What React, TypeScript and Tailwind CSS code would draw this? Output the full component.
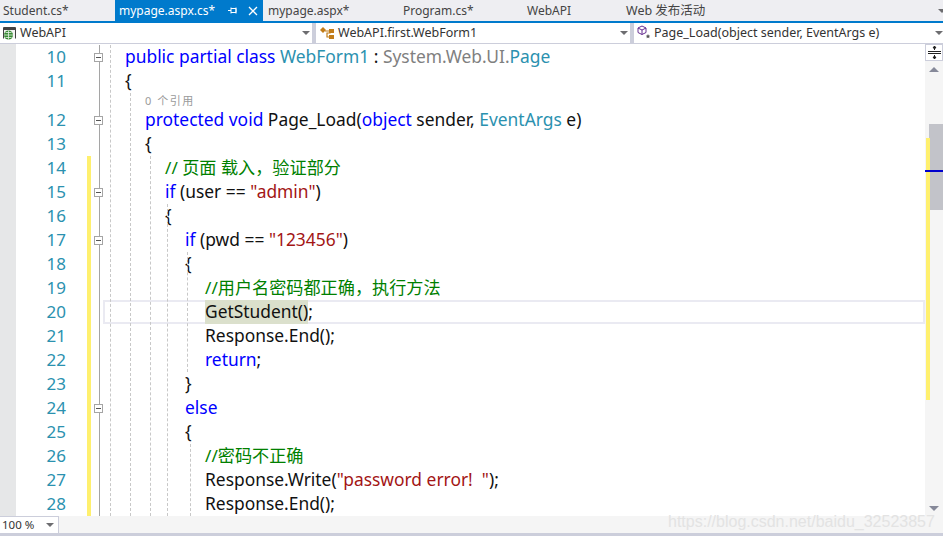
import React from "react";

const K = "text-[#0000ff]";
const T = "text-[#2b91af]";
const S = "text-[#a31515]";
const C = "text-[#008000] text-[17.15px]";
const G = "text-[#808080]";
const H = "text-[#111] bg-[#dbe0cc] h-[24px] flex items-center";

type Seg = [string, string?];
type Line = { n: number; x: number; segs: Seg[]; fold?: boolean; lens?: boolean; hl?: boolean };

const lines: Line[] = [
  { n: 10, x: 126, fold: true, segs: [["public partial class ", K], ["WebForm1", T], [" : "], ["System.Web.UI.", G], ["Page", T]] },
  { n: 11, x: 126, segs: [["{"]] },
  { n: 12, x: 146, fold: true, lens: true, segs: [["protected void ", K], ["Page_Load("], ["object", K], [" sender, "], ["EventArgs", T], [" e)"]] },
  { n: 13, x: 146, segs: [["{"]] },
  { n: 14, x: 166, segs: [["// 页面 载入，验证部分", C]] },
  { n: 15, x: 166, fold: true, segs: [["if", K], [" (user == "], ["\"admin\"", S], [")"]] },
  { n: 16, x: 166, segs: [["{"]] },
  { n: 17, x: 186, fold: true, segs: [["if", K], [" (pwd == "], ["\"123456\"", S], [")"]] },
  { n: 18, x: 186, segs: [["{"]] },
  { n: 19, x: 206, segs: [["//用户名密码都正确，执行方法", C]] },
  { n: 20, x: 206, hl: true, segs: [["GetStudent()", H], [";"]] },
  { n: 21, x: 206, segs: [["Response.End();"]] },
  { n: 22, x: 206, segs: [["return", K], [";"]] },
  { n: 23, x: 186, segs: [["}"]] },
  { n: 24, x: 186, fold: true, segs: [["else", K]] },
  { n: 25, x: 186, segs: [["{"]] },
  { n: 26, x: 206, segs: [["//密码不正确", C]] },
  { n: 27, x: 206, segs: [["Response.Write("], ["\"password error!  \"", S], [");"]] },
  { n: 28, x: 206, segs: [["Response.End();"]] },
];

const tabs = [
  { t: "Student.cs*", w: "w-[115px]", pl: "pl-[3px]" },
  { t: "mypage.aspx.cs*", w: "w-[148px]", pl: "pl-[4px]", active: true },
  { t: "mypage.aspx*", w: "w-[135px]", pl: "pl-[5px]" },
  { t: "Program.cs*", w: "w-[124px]", pl: "pl-[5px]" },
  { t: "WebAPI", w: "w-[99px]", pl: "pl-[5px]" },
  { t: "Web 发布活动", w: "flex-1 text-[12.5px]", pl: "pl-[5px]" },
];

const Caret = () => (
  <span className="block w-0 h-0 border-x-[4px] border-x-transparent border-t-[4px] border-t-[#6d6d70]" />
);

const Fold = () => (
  <span className="block w-[9px] h-[9px] border border-[#a5a5a5] bg-white relative">
    <span className="absolute left-[1px] top-[3px] w-[5px] h-px bg-[#555]" />
  </span>
);

const guides = [
  "left-[110px] top-[1px] h-[471px]",
  "left-[130px] top-[49px] h-[423px]",
  "left-[150px] top-[112px] h-[360px]",
  "left-[167px] top-[160px] h-[312px]",
  "left-[187px] top-[208px] h-[120px]",
  "left-[190px] top-[400px] h-[72px]",
];

export default function App() {
  return (
    <div
      className="w-[943px] h-[536px] overflow-hidden flex flex-col bg-white text-[#1e1e1e]"
      style={{ fontFamily: '"Noto Sans", "Noto Sans CJK SC", sans-serif' }}
    >
      {/* tabs */}
      <div className="h-[21px] flex bg-[#eeeef2] text-[12px] leading-none text-[#444] shrink-0">
        {tabs.map((t) => (
          <div
            key={t.t}
            className={`${t.w} ${t.pl} flex items-center whitespace-nowrap ${t.active ? "bg-[#007acc] text-white justify-between pr-[3px] pl-[4px]" : ""}`}
          >
            <span className="mt-px">{t.t}</span>
            {t.active && (
              <span className="flex items-center gap-[11px] pr-[2px]">
                <svg width="9" height="9" viewBox="0 0 9 9" fill="none" stroke="#fff" strokeWidth="1">
                  <path d="M0 4.5h3M3 1.5v6M3 2.5h5v4H3M8 1.5v6" />
                </svg>
                <svg width="10" height="10" viewBox="0 0 10 10" fill="none" stroke="#fff" strokeWidth="1.3">
                  <path d="M1 1l8 8M9 1l-8 8" />
                </svg>
              </span>
            )}
            {t.t === "Web 发布活动" && <span className="ml-auto -mr-[3px]"><Caret /></span>}
          </div>
        ))}
      </div>
      <div className="h-[2px] bg-[#007acc] shrink-0" />
      {/* nav bar */}
      <div className="h-[21px] flex bg-[#cccedb] border-b border-[#cccedb] text-[12.5px] leading-none text-[#333] shrink-0">
        <div className="w-[312px] bg-white flex items-center pl-[3px] pr-[2px]">
          <svg width="14" height="13" viewBox="0 0 14 13" className="shrink-0">
            <path d="M0.5 11.5V0.5h12v11" fill="#f4f4f4" stroke="#424242" />
            <rect x="1" y="1" width="11" height="2" fill="#424242" />
            <circle cx="5.5" cy="8" r="4.5" fill="#388a34" />
            <path d="M1 8h9M5.5 3.5v9M2.5 5.5h6M2.5 10.5h6" stroke="#e6f2e5" strokeWidth="0.8" />
          </svg>
          <span className="ml-[3px] mt-px">WebAPI</span>
          <span className="ml-auto"><Caret /></span>
        </div>
        <div className="w-[4px]" />
        <div className="w-[314px] bg-white flex items-center pl-[4px] pr-[2px]">
          <svg width="15" height="13" viewBox="0 0 15 13" className="shrink-0">
            <path d="M0 3l3-3 3 3-3 3z" fill="#c27d1a" />
            <path d="M5 4h5v2H7v4h3" fill="none" stroke="#c27d1a" strokeWidth="1.2" />
            <rect x="9" y="2" width="5" height="4" fill="#c27d1a" />
            <rect x="9" y="8" width="5" height="4" fill="#c27d1a" />
          </svg>
          <span className="ml-[3px] mt-px">WebAPI.first.WebForm1</span>
          <span className="ml-auto"><Caret /></span>
        </div>
        <div className="w-[4px]" />
        <div className="flex-1 bg-white flex items-center pl-[3px]">
          <svg width="14" height="14" viewBox="0 0 14 14" className="shrink-0 -mt-[2px]" fill="none">
            <path d="M5 1l4 2v4.5L5 9.5 1 7.5V3z M1 3l4 2 4-2M5 5v4.5" stroke="#652d90" strokeWidth="1" />
            <path d="M11 9l.7 1.5 1.5.2-1.1 1 .3 1.5-1.4-.8-1.4.8.3-1.5-1.1-1 1.5-.2z" fill="#555" />
          </svg>
          <span className="ml-[3px] mt-px">Page_Load(object sender, EventArgs e)</span>
          <span className="ml-auto"><Caret /></span>
        </div>
      </div>
      {/* editor */}
      <div className="h-[472px] flex shrink-0 relative">
        <div className="w-[16px] bg-[#e6e7e8] shrink-0" />
        <div className="w-[909px] relative pt-[1px] text-[17.4px] overflow-hidden">
          {lines.map((l) => (
            <div key={l.n}>
              {l.lens && (
                <div className="h-[15px] flex items-center pl-[129px] text-[11px] text-[#9a9a9a] tracking-[1.5px] leading-none">
                  0 个引用
                </div>
              )}
              <div className="h-[24px] flex items-center relative leading-none">
                <span className="w-[50px] text-right text-[17px] text-[#2b91af] shrink-0 -mt-[2px]">{l.n}</span>
                <span
                  className={`w-[4px] h-full ml-[21px] shrink-0 ${l.n >= 14 ? "bg-[#fff06e]" : ""}`}
                />
                <span className="w-[9px] ml-[3px] shrink-0 relative z-10">
                  {l.fold && <Fold />}
                </span>
                {l.hl && (
                  <span className="absolute left-[87px] w-[822px] top-0 bottom-0 border-2 border-[#eaeaf2]" />
                )}
                <span
                  className={`relative whitespace-pre ${l.hl ? "flex items-center" : ""}`}
                  style={{ marginLeft: l.x - 104 }}
                >
                  {l.segs.map((s, i) => (
                    <span key={i} className={s[1] ?? "text-[#111]"}>
                      {s[0]}
                    </span>
                  ))}
                </span>
              </div>
            </div>
          ))}
          {/* outline column line (overlay) */}
          <span className="absolute left-[83px] top-[1px] bottom-0 w-px bg-[#a5a5a5]" />
          {guides.map((g) => (
            <span key={g} className={`absolute border-l border-dashed border-[#c8c8c8] -ml-[16px] ${g}`} />
          ))}
        </div>
        {/* scrollbar */}
        <div className="w-[18px] bg-[#f5f5f5] relative shrink-0 flex flex-col items-center">
          <div className="w-[18px] h-[17px] bg-white border border-[#cccedb] flex items-center justify-center">
            <svg width="13" height="13" viewBox="0 0 13 13" fill="none" stroke="#222" strokeWidth="1">
              <path d="M0 5.5h13M0 7.5h13M6.5 0v4M6.5 9v4" />
              <path d="M5 2l1.5-2L8 2zM5 11l1.5 2L8 11z" fill="#222" />
            </svg>
          </div>
          <span className="mt-[6px] w-0 h-0 border-x-[5px] border-x-transparent border-b-[5px] border-b-[#868999]" />
          <span className="absolute left-[4px] right-0 top-[80px] h-[86px] bg-[#c2c3c9]" />
          <span className="absolute left-[1px] w-[4px] top-[94px] h-[262px] bg-[#fff06e]" />
          <span className="absolute left-0 right-0 top-[126px] h-[2px] bg-[#0000cd]" />
          <span className="absolute bottom-[5px] w-0 h-0 border-x-[5px] border-x-transparent border-t-[5px] border-t-[#868999]" />
        </div>
      </div>
      {/* bottom */}
      <div className="h-[17px] bg-[#f5f5f5] flex shrink-0 relative">
        <div className="w-[59px] h-[17px] bg-white border-t border-r border-[#cccedb] flex items-center pl-[2px] pr-[4px] text-[11.5px] text-[#333]">
          <span>100 %</span>
          <span className="ml-auto"><Caret /></span>
        </div>
        <span
          className="absolute left-[668px] -top-[6px] text-[16px] text-[#e3e3e3] whitespace-nowrap"
          style={{ fontFamily: '"Liberation Sans", sans-serif' }}
        >
          https://blog.csdn.net/baidu_32523857
        </span>
      </div>
      <div className="flex-1 bg-[#cccedb]" />
    </div>
  );
}
